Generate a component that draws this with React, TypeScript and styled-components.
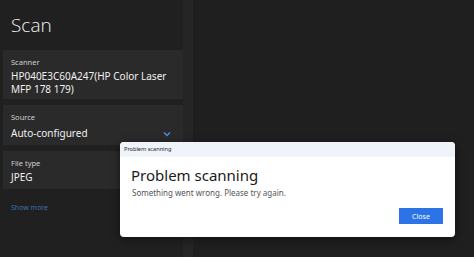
import React from 'react';
import styled, { createGlobalStyle } from 'styled-components';

const Global = createGlobalStyle`
  html, body { margin: 0; padding: 0; background: #1f1f1f; }
  body { font-family: "Segoe UI", "Noto Sans", "Open Sans", sans-serif; }
`;

const Stage = styled.main`
  position: relative;
  width: 474px;
  height: 257px;
  display: flex;
  overflow: hidden;
  background: #1f1f1f;
`;

const Sidebar = styled.aside`
  width: 180px;
  background: #202020;
  padding: 0 0 0 3px;
  display: flex;
  flex-direction: column;
`;

const Rail = styled.div`
  width: 10px;
  background: #252525;
`;

const Title = styled.h1`
  margin: 11px 0 0 8px;
  height: 39px;
  font-family: "Open Sans", "Noto Sans", sans-serif;
  font-size: 19px;
  font-weight: 300;
  color: #f2f2f2;
  line-height: 28px;
`;

const Card = styled.section<{ $h: number }>`
  height: ${(p) => p.$h}px;
  background: #2a2a2a;
  margin-bottom: 6px;
  padding: 7px 8px 0;
  box-sizing: border-box;
  display: flex;
  flex-direction: column;
`;

const Label = styled.div`
  font-size: 7.5px;
  color: #cfcfcf;
  line-height: 11px;
`;

const Value = styled.div<{ $gap?: number }>`
  font-size: 10px;
  color: #f0f0f0;
  line-height: 13px;
  margin-top: ${(p) => p.$gap ?? 2}px;
  white-space: nowrap;
`;

const Row = styled.div`
  display: flex;
  align-items: center;
  justify-content: space-between;
  margin-top: 4px;
  padding-right: 4px;
`;

const Link = styled.a`
  margin: 8px 0 0 8px;
  font-size: 7px;
  color: #3e6fae;
`;

const Dialog = styled.div`
  position: absolute;
  left: 120px;
  top: 142px;
  width: 335px;
  height: 95px;
  background: #fff;
  border-radius: 4px;
  overflow: hidden;
  display: flex;
  flex-direction: column;
  box-shadow: 0 2px 10px rgba(0, 0, 0, 0.5);
`;

const DialogBar = styled.div`
  height: 15px;
  background: #eff3fa;
  font-size: 5.6px;
  color: #222;
  padding-left: 4px;
  line-height: 15px;
`;

const DialogBody = styled.div`
  flex: 1;
  padding: 8px 12px 0 11px;
  display: flex;
  flex-direction: column;
`;

const Heading = styled.div`
  font-size: 15px;
  color: #1a1a1a;
  line-height: 20px;
`;

const Message = styled.div`
  font-size: 8px;
  color: #555;
  margin-top: 2px;
  margin-left: 1px;
`;

const Actions = styled.div`
  display: flex;
  justify-content: flex-end;
  margin-top: 10px;
`;

const Button = styled.button`
  width: 44px;
  height: 16px;
  border: none;
  background: #2b73e6;
  color: #fff;
  font-family: inherit;
  font-size: 7px;
  padding: 0;
`;

const Chevron = () => (
  <svg width="8" height="6" viewBox="0 0 8 6">
    <path d="M1 1.5l3 3 3-3" fill="none" stroke="#4a90e2" strokeWidth="1.4" />
  </svg>
);

export default function App() {
  return (
    <>
      <Global />
      <Stage>
        <Sidebar>
          <Title>Scan</Title>
          <Card $h={49}>
            <Label>Scanner</Label>
            <Value>HP040E3C60A247(HP Color Laser</Value>
            <Value $gap={0}>MFP 178 179)</Value>
          </Card>
          <Card $h={40}>
            <Label>Source</Label>
            <Row>
              <Value $gap={0}>Auto-configured</Value>
              <Chevron />
            </Row>
          </Card>
          <Card $h={38}>
            <Label>File type</Label>
            <Value>JPEG</Value>
          </Card>
          <Link>Show more</Link>
        </Sidebar>
        <Rail />
        <Dialog>
          <DialogBar>Problem scanning</DialogBar>
          <DialogBody>
            <Heading>Problem scanning</Heading>
            <Message>Something went wrong. Please try again.</Message>
            <Actions>
              <Button>Close</Button>
            </Actions>
          </DialogBody>
        </Dialog>
      </Stage>
    </>
  );
}
